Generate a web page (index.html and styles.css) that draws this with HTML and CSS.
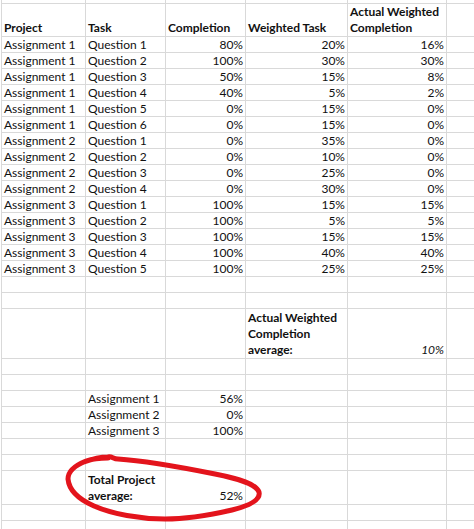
FILE: index.html
```html
<!DOCTYPE html>
<html lang="en">
<head>
<meta charset="utf-8">
<title>Project completion sheet</title>
<link rel="stylesheet" href="styles.css">
</head>
<body>
<div class="sheet">
<table class="grid">
<colgroup>
<col class="ca"><col class="cb"><col class="cc"><col class="cd"><col class="ce"><col class="cf">
</colgroup>
<tbody>
<tr class="r-top"><td></td><td></td><td></td><td></td><td></td><td></td></tr>
<tr class="r-head">
<td class="b">Project</td><td class="b">Task</td><td class="b">Completion</td><td class="b">Weighted Task</td><td class="b">Actual Weighted<br>Completion</td><td></td>
</tr>
<tr><td>Assignment 1</td><td>Question 1</td><td class="n">80%</td><td class="n">20%</td><td class="n">16%</td><td></td></tr>
<tr><td>Assignment 1</td><td>Question 2</td><td class="n">100%</td><td class="n">30%</td><td class="n">30%</td><td></td></tr>
<tr><td>Assignment 1</td><td>Question 3</td><td class="n">50%</td><td class="n">15%</td><td class="n">8%</td><td></td></tr>
<tr><td>Assignment 1</td><td>Question 4</td><td class="n">40%</td><td class="n">5%</td><td class="n">2%</td><td></td></tr>
<tr><td>Assignment 1</td><td>Question 5</td><td class="n">0%</td><td class="n">15%</td><td class="n">0%</td><td></td></tr>
<tr><td>Assignment 1</td><td>Question 6</td><td class="n">0%</td><td class="n">15%</td><td class="n">0%</td><td></td></tr>
<tr><td>Assignment 2</td><td>Question 1</td><td class="n">0%</td><td class="n">35%</td><td class="n">0%</td><td></td></tr>
<tr><td>Assignment 2</td><td>Question 2</td><td class="n">0%</td><td class="n">10%</td><td class="n">0%</td><td></td></tr>
<tr><td>Assignment 2</td><td>Question 3</td><td class="n">0%</td><td class="n">25%</td><td class="n">0%</td><td></td></tr>
<tr><td>Assignment 2</td><td>Question 4</td><td class="n">0%</td><td class="n">30%</td><td class="n">0%</td><td></td></tr>
<tr><td>Assignment 3</td><td>Question 1</td><td class="n">100%</td><td class="n">15%</td><td class="n">15%</td><td></td></tr>
<tr><td>Assignment 3</td><td>Question 2</td><td class="n">100%</td><td class="n">5%</td><td class="n">5%</td><td></td></tr>
<tr><td>Assignment 3</td><td>Question 3</td><td class="n">100%</td><td class="n">15%</td><td class="n">15%</td><td></td></tr>
<tr><td>Assignment 3</td><td>Question 4</td><td class="n">100%</td><td class="n">40%</td><td class="n">40%</td><td></td></tr>
<tr><td>Assignment 3</td><td>Question 5</td><td class="n">100%</td><td class="n">25%</td><td class="n">25%</td><td></td></tr>
<tr><td></td><td></td><td></td><td></td><td></td><td></td></tr>
<tr><td></td><td></td><td></td><td></td><td></td><td></td></tr>
<tr class="r-tall3">
<td></td><td></td><td></td><td class="b">Actual Weighted<br>Completion<br>average:</td><td class="n i">10%</td><td></td>
</tr>
<tr><td></td><td></td><td></td><td></td><td></td><td></td></tr>
<tr><td></td><td></td><td></td><td></td><td></td><td></td></tr>
<tr><td></td><td>Assignment 1</td><td class="n">56%</td><td></td><td></td><td></td></tr>
<tr><td></td><td>Assignment 2</td><td class="n">0%</td><td></td><td></td><td></td></tr>
<tr><td></td><td>Assignment 3</td><td class="n">100%</td><td></td><td></td><td></td></tr>
<tr><td></td><td></td><td></td><td></td><td></td><td></td></tr>
<tr><td></td><td></td><td></td><td></td><td></td><td></td></tr>
<tr class="r-tall2">
<td></td><td class="b">Total Project<br>average:</td><td class="n">52%</td><td></td><td></td><td></td>
</tr>
<tr><td></td><td></td><td></td><td></td><td></td><td></td></tr>
<tr><td></td><td></td><td></td><td></td><td></td><td></td></tr>
</tbody>
</table>
<svg class="mark" width="474" height="529" viewBox="0 0 474 529" aria-hidden="true">
<path d="M 84 462 C 92 459, 100 457, 108 457 C 112 456, 113 459, 118 459 C 150 461, 185 468, 215 474 C 240 479, 256 484, 259 492 C 261 500, 248 506, 232 510 C 210 515, 190 519, 165 519 C 140 519, 112 514, 94 506 C 78 499, 69 490, 68 479 C 68 470, 76 465, 86 461 C 92 459, 100 458, 108 458"/>
</svg>
</div>
</body>
</html>
```

FILE: styles.css
```css
html, body {
  margin: 0;
  padding: 0;
  overflow: hidden;
  background: #ffffff;
}

.sheet {
  position: relative;
  width: 474px;
  height: 529px;
  overflow: hidden;
}

.grid {
  table-layout: fixed;
  border-collapse: separate;
  border-spacing: 1px;
  background: #d9d9d9;
  width: 489px;
  margin: -1px 0 0 1px;
  font-family: Lato, "Open Sans", sans-serif;
  font-size: 12px;
  color: #111111;
}

.ca { width: 83px; }
.cb { width: 79px; }
.cc { width: 79px; }
.cd { width: 101px; }
.ce { width: 98px; }
.cf { width: 42px; }

.grid td {
  box-sizing: border-box;
  background: #ffffff;
  height: 15px;
  padding: 0 3px 0 2px;
  line-height: 15px;
  vertical-align: bottom;
  white-space: nowrap;
  overflow: hidden;
}

.grid .r-top td { height: 3px; line-height: 3px; }
.grid .r-head td { height: 32px; line-height: 16px; }
.grid .r-tall3 td { height: 49px; line-height: 16px; }
.grid .r-tall2 td { height: 33px; line-height: 16px; }

.grid td.b { font-weight: 700; }
.grid td.n { text-align: right; padding-right: 2px; }
.grid td.i { font-style: italic; }

.mark {
  position: absolute;
  left: 0;
  top: 0;
  pointer-events: none;
}

.mark path {
  fill: none;
  stroke: #e3141c;
  stroke-width: 5;
  stroke-linecap: round;
  stroke-linejoin: round;
}
```
